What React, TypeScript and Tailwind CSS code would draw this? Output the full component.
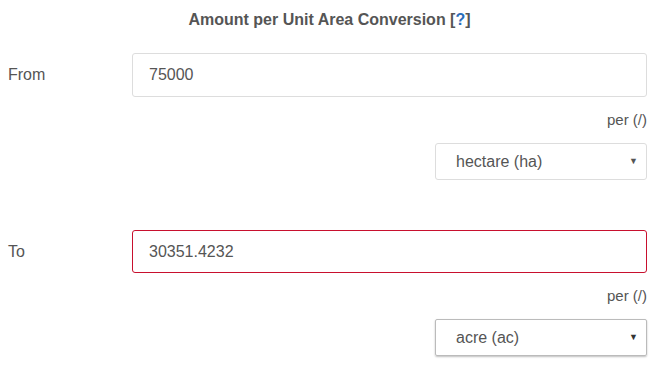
export default function App() {
  return (
    <div className="w-[659px] h-[371px] bg-white text-[#555] font-['Liberation_Sans',Arial,sans-serif] overflow-hidden">
      <h2 className="pt-[10px] h-[20px] box-content text-center text-[16px] font-bold leading-[20px] text-[#555]">
        Amount per Unit Area Conversion [<span className="text-[#2a6ebb]">?</span>]
      </h2>

      <div className="flex items-center mt-[23px] pl-[8px] pr-[12px]">
        <label className="w-[124px] text-[16px]">From</label>
        <input
          type="text"
          defaultValue="75000"
          className="flex-1 h-[44px] px-[16px] text-[16px] text-[#555] border border-[#ddd] rounded-[3px] outline-none"
        />
      </div>
      <div className="pr-[12px] mt-[13px] text-right text-[15px] leading-[20px]">per (/)</div>
      <div className="flex justify-end pr-[12px] mt-[13px]">
        <div className="relative w-[212px] h-[37px] border border-[#ddd] rounded-[3px] flex items-center">
          <span className="pl-[20px] text-[16px]">hectare (ha)</span>
          <span className="absolute right-[8px] top-[11px] text-[9px]">▼</span>
        </div>
      </div>

      <div className="flex items-center mt-[50px] pl-[8px] pr-[12px]">
        <label className="w-[124px] text-[16px]">To</label>
        <input
          type="text"
          defaultValue="30351.4232"
          className="flex-1 h-[43px] px-[16px] text-[16px] text-[#555] border border-[#c8102e] rounded-[3px] outline-none"
        />
      </div>
      <div className="pr-[12px] mt-[13px] text-right text-[15px] leading-[20px]">per (/)</div>
      <div className="flex justify-end pr-[12px] mt-[13px]">
        <div className="relative w-[212px] h-[37px] border border-[#bbb] rounded-[2px] shadow-[0_1px_2px_rgba(0,0,0,0.25)] flex items-center">
          <span className="pl-[20px] text-[16px]">acre (ac)</span>
          <span className="absolute right-[8px] top-[11px] text-[9px] text-[#333]">▼</span>
        </div>
      </div>
    </div>
  );
}
